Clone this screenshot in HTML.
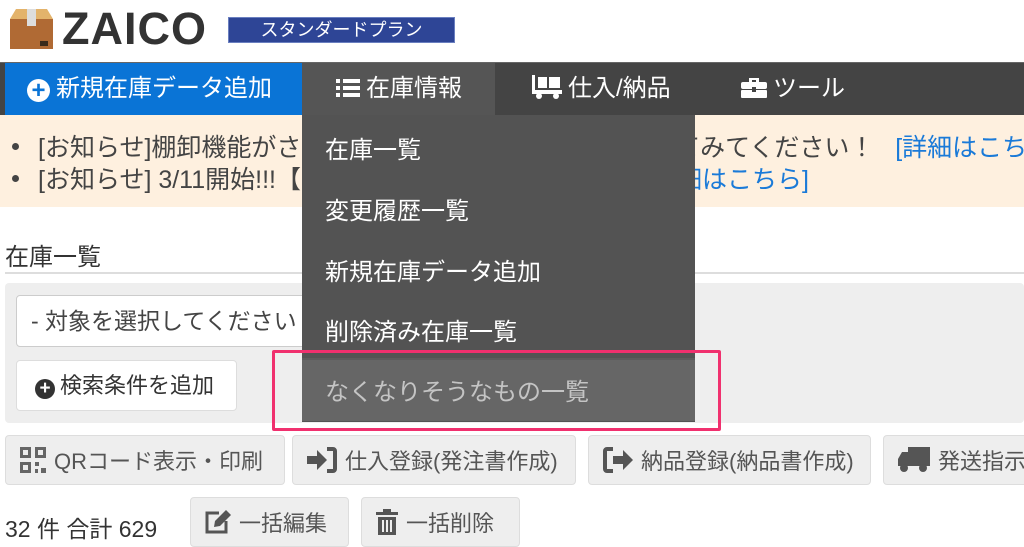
<!DOCTYPE html>
<html><head><meta charset="utf-8"><style>
*{margin:0;padding:0;box-sizing:border-box}
body{width:1024px;height:532px;overflow:hidden;background:#fff;font-family:"Liberation Sans","Noto Sans CJK JP",sans-serif;position:relative;color:#333}
.a{position:absolute;white-space:nowrap}
.btn{position:absolute;background:#eee;border:1px solid #ddd;border-radius:4px;font-size:22px;color:#555;display:flex;align-items:center;padding-left:14px;gap:8px}
.mi{position:absolute;left:325px;font-size:24px;color:#fff}
.dot{position:absolute;left:12px;width:7px;height:7px;border-radius:50%;background:#444}
</style></head><body>
<svg class="a" style="left:10px;top:9px" width="43" height="40" viewBox="0 0 43 40"><path d="M6 0h31l6 10H0z" fill="#e3b36b"/><rect x="0" y="10" width="43" height="30" fill="#b06a34"/><rect x="17" y="0" width="9" height="17" fill="#ddd"/><rect x="30" y="32" width="8" height="5" fill="#3a2a1a"/></svg>
<div class="a" style="left:62px;top:3px;font-size:45px;font-weight:bold;color:#333;letter-spacing:1px">ZAICO</div>
<div class="a" style="left:228px;top:17px;width:227px;height:26px;background:#2e4596;color:#fff;font-size:18px;text-align:center;line-height:25px;border:1px solid #6a7fc0">スタンダードプラン</div>
<div class="a" style="left:0;top:62px;width:1024px;height:53px;background:#444;border-top:1px solid #666"></div>
<div class="a" style="left:5px;top:63px;width:297px;height:52px;background:#0a74d6;color:#fff;font-size:24px;line-height:52px;padding-left:22px">
<span style="display:inline-block;width:23px;height:23px;border-radius:50%;background:#fff;color:#0a74d6;font-weight:bold;text-align:center;line-height:23px;font-size:24px;vertical-align:-2px;margin-right:6px">+</span>新規在庫データ追加</div>
<div class="a" style="left:302px;top:63px;width:193px;height:52px;background:#555;color:#fff;font-size:24px;line-height:52px;padding-left:34px">
<svg width="24" height="18" viewBox="0 0 24 18" style="vertical-align:-1px;margin-right:6px"><g fill="#fff"><rect x="0" y="0" width="4" height="4"/><rect x="0" y="7" width="4" height="4"/><rect x="0" y="14" width="4" height="4"/><rect x="7" y="0" width="17" height="4"/><rect x="7" y="7" width="17" height="4"/><rect x="7" y="14" width="17" height="4"/></g></svg>在庫情報</div>
<div class="a" style="left:532px;top:63px;color:#fff;font-size:24px;line-height:52px">
<svg width="30" height="24" viewBox="0 0 30 24" style="vertical-align:-3px;margin-right:6px"><g fill="#fff"><rect x="0" y="0" width="3" height="18"/><rect x="0" y="15" width="30" height="4"/><rect x="6" y="2" width="9" height="11"/><rect x="17" y="2" width="11" height="11"/><circle cx="7" cy="21" r="3"/><circle cx="24" cy="21" r="3"/></g></svg>仕入/納品</div>
<div class="a" style="left:741px;top:63px;color:#fff;font-size:24px;line-height:52px">
<svg width="26" height="20" viewBox="0 0 26 20" style="vertical-align:-2px;margin-right:6px"><g fill="#fff"><path d="M8 0h10v4h-3V2h-4v2H8z"/><rect x="0" y="4" width="26" height="7" rx="2"/><rect x="0" y="12" width="26" height="8" rx="1"/></g><rect x="11" y="9" width="4" height="5" fill="#444"/></svg>ツール</div>
<div class="a" style="left:0;top:115px;width:1024px;height:92px;background:#fef0df"></div>
<div class="dot" style="top:143px"></div>
<div class="dot" style="top:175px"></div>
<div class="a" style="left:38px;top:128px;font-size:25px;color:#444">[お知らせ]棚卸機能がさらに便利になりました。ぜひ使ってみてください！&nbsp;&nbsp; <span style="color:#1a7ad8">[詳細はこちら]</span></div>
<div class="a" style="left:38px;top:160px;font-size:25px;color:#444">[お知らせ] 3/11開始!!!【3月キャンペーン】のお知らせ <span style="color:#1a7ad8">[詳細はこちら]</span></div>
<div class="a" style="left:5px;top:237px;font-size:24px;color:#333">在庫一覧</div>
<div class="a" style="left:5px;top:272px;width:1019px;height:2px;background:#ddd"></div>
<div class="a" style="left:5px;top:283px;width:1019px;height:140px;background:#eee;border-radius:4px"></div>
<div class="a" style="left:16px;top:295px;width:400px;height:52px;background:#fff;border:1px solid #ccc;border-radius:4px;font-size:23px;line-height:50px;padding-left:14px;color:#444">- 対象を選択してください -</div>
<div class="a" style="left:16px;top:360px;width:221px;height:51px;background:#fff;border:1px solid #ddd;border-radius:4px;font-size:22px;line-height:49px;padding-left:18px;color:#333"><span style="display:inline-block;width:20px;height:20px;border-radius:50%;background:#333;color:#fff;text-align:center;line-height:20px;font-size:19px;font-weight:bold;margin-right:5px;vertical-align:-1px">+</span>検索条件を追加</div>
<div class="btn" style="left:5px;top:435px;width:280px;height:50px">
<svg width="26" height="26" viewBox="0 0 26 26"><g fill="#666"><path d="M0 0h11v11H0zM3 3v5h5V3z"/><path d="M15 0h11v11H15zM18 3v5h5V3z"/><path d="M0 15h11v11H0zM3 18v5h5v-5z"/><rect x="15" y="15" width="4" height="4"/><rect x="21" y="21" width="5" height="5"/><rect x="15" y="22" width="3" height="4"/></g></svg>QRコード表示・印刷</div>
<div class="btn" style="left:292px;top:435px;width:284px;height:50px">
<svg width="30" height="26" viewBox="0 0 30 26"><g fill="#555"><path d="M0 9h10V3l10 10-10 10v-6H0z"/><path d="M20 0h6a4 4 0 0 1 4 4v18a4 4 0 0 1-4 4h-6v-4h6V4h-6z"/></g></svg>仕入登録(発注書作成)</div>
<div class="btn" style="left:588px;top:435px;width:283px;height:50px">
<svg width="30" height="26" viewBox="0 0 30 26"><g fill="#555"><path d="M10 0H4a4 4 0 0 0-4 4v18a4 4 0 0 0 4 4h6v-4H4V4h6z"/><path d="M10 9h10V3l10 10-10 10v-6H10z"/></g></svg>納品登録(納品書作成)</div>
<div class="btn" style="left:883px;top:435px;width:160px;height:50px">
<svg width="32" height="26" viewBox="0 0 32 26"><g fill="#555"><rect x="10" y="0" width="22" height="19"/><path d="M0 12l4-7h6v14H0z"/><circle cx="6" cy="21" r="4"/><circle cx="25" cy="21" r="4"/></g></svg>発送指示</div>
<div class="a" style="left:5px;top:510px;font-size:23px;color:#333">32 件 合計 629</div>
<div class="btn" style="left:190px;top:497px;width:159px;height:50px">
<svg width="26" height="24" viewBox="0 0 26 24"><g fill="none" stroke="#555" stroke-width="3"><path d="M14 3H2v19h19V11"/></g><path d="M21 0l5 5-11 11-6 1 1-6z" fill="#555"/></svg>一括編集</div>
<div class="btn" style="left:361px;top:497px;width:159px;height:50px">
<svg width="22" height="26" viewBox="0 0 22 26"><g fill="#555"><rect x="0" y="3" width="22" height="3"/><rect x="7" y="0" width="8" height="3"/><path d="M2 8h18v18H2zM6 11v12h2V11zM10 11v12h2V11zM14 11v12h2V11z"/></g></svg>一括削除</div>
<div class="a" style="left:302px;top:115px;width:393px;height:307px;background:#535353"></div>
<div class="mi" style="top:130px">在庫一覧</div>
<div class="mi" style="top:191px">変更履歴一覧</div>
<div class="mi" style="top:252px">新規在庫データ追加</div>
<div class="mi" style="top:312px">削除済み在庫一覧</div>
<div class="a" style="left:302px;top:358px;width:393px;height:63px;background:#666;border-top:2px solid #5c5c5c"></div>
<div class="mi" style="top:372px;color:#c4c4c4">なくなりそうなもの一覧</div>
<div class="a" style="left:272px;top:350px;width:449px;height:81px;border:3px solid #f0306e;border-radius:2px"></div>
</body></html>
